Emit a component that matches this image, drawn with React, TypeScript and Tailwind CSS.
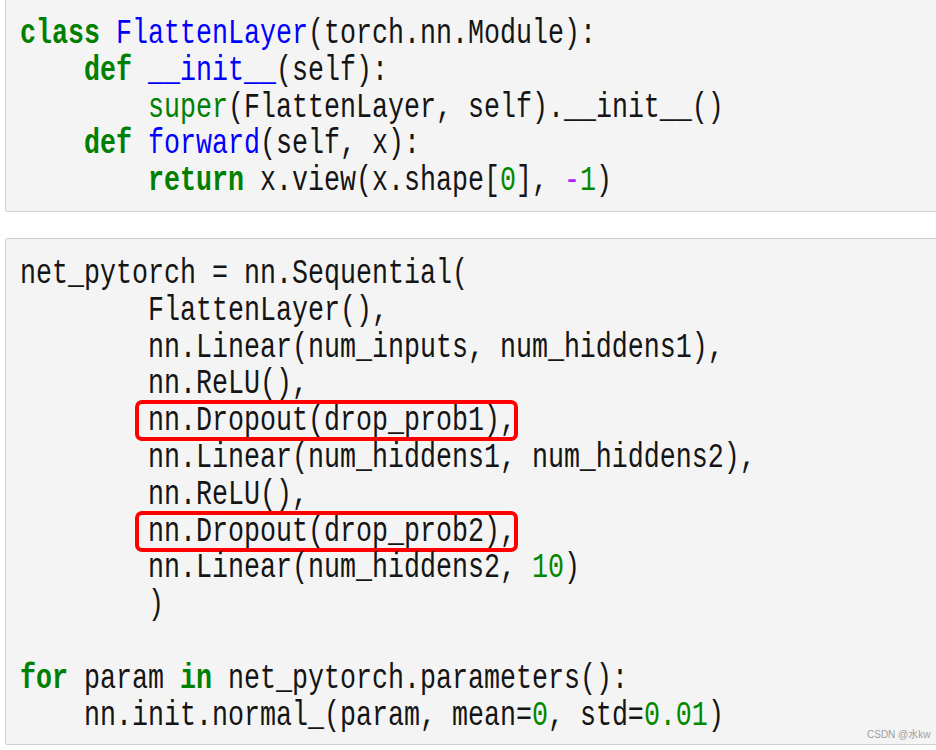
import React from "react";

type Tok = [string, string?];

const K = "text-[#008000] font-bold"; // keyword
const D = "text-[#0000ff]"; // def / class name
const B = "text-[#008000]"; // builtin
const N = "text-[#008800]"; // number
const O = "text-[#aa22ff]"; // operator

function Line({ toks, box }: { toks: Tok[]; box?: boolean }) {
  return (
    <div className="relative h-[36.8px] leading-[36.8px] whitespace-pre">
      {box && (
        <div className="absolute left-[115px] top-[-3px] h-[41px] w-[383px] rounded-[7px] border-4 border-[#ff0000]" />
      )}
      {toks.length === 0 ? (
        <span> </span>
      ) : (
        toks.map((t, i) => (
          <span
            key={i}
            className={`inline-block origin-center scale-y-[1.3] ${t[1] ?? "text-[#151515]"}`}
          >
            {t[0]}
          </span>
        ))
      )}
    </div>
  );
}

const cell1: Tok[][] = [
  [["class", K], [" "], ["FlattenLayer", D], ["(torch.nn.Module):"]],
  [["    "], ["def", K], [" "], ["__init__", D], ["(self):"]],
  [["        "], ["super", B], ["(FlattenLayer, self).__init__()"]],
  [["    "], ["def", K], [" "], ["forward", D], ["(self, x):"]],
  [["        "], ["return", K], [" x.view(x.shape["], ["0", N], ["], "], ["-", O], ["1", N], [")"]],
];

const cell2: { t: Tok[]; box?: boolean }[] = [
  { t: [["net_pytorch = nn.Sequential("]] },
  { t: [["        FlattenLayer(),"]] },
  { t: [["        nn.Linear(num_inputs, num_hiddens1),"]] },
  { t: [["        nn.ReLU(),"]] },
  { t: [["        nn.Dropout(drop_prob1),"]], box: true },
  { t: [["        nn.Linear(num_hiddens1, num_hiddens2),"]] },
  { t: [["        nn.ReLU(),"]] },
  { t: [["        nn.Dropout(drop_prob2),"]], box: true },
  { t: [["        nn.Linear(num_hiddens2, "], ["10", N], [")"]] },
  { t: [["        )"]] },
  { t: [] },
  { t: [["for", K], [" param "], ["in", K], [" net_pytorch.parameters():"]] },
  {
    t: [["    nn.init.normal_(param, mean="], ["0", N], [", std="], ["0.01", N], [")"]],
  },
];

export default function App() {
  return (
    <div
      className="relative h-[750px] w-[936px] overflow-hidden bg-white text-[26.67px]"
      style={{ fontFamily: '"Liberation Mono", "DejaVu Sans Mono", monospace' }}
    >
      <div className="ml-[5px] mt-[-2px] w-[960px] rounded-[2px] border border-[#cfcfcf] bg-[#f4f4f4] pb-[11px] pl-[14px] pt-[17px]">
        {cell1.map((l, i) => (
          <Line key={i} toks={l} />
        ))}
      </div>
      <div className="ml-[5px] mt-[26px] w-[960px] rounded-[2px] border border-[#cfcfcf] bg-[#f4f4f4] pb-[10px] pl-[14px] pt-[17px]">
        {cell2.map((l, i) => (
          <Line key={i} toks={l.t} box={l.box} />
        ))}
      </div>
      <div
        className="absolute left-[867px] top-[729px] text-[10px] leading-[12px] text-[#a0a0a0]"
        style={{ fontFamily: '"Liberation Sans", "Noto Sans CJK SC", sans-serif' }}
      >
        CSDN @水kw
      </div>
    </div>
  );
}
